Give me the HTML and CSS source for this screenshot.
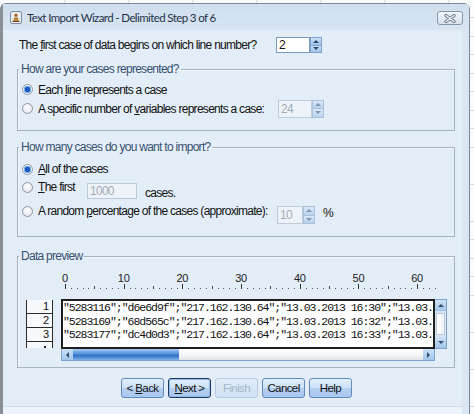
FILE: index.html
```html
<!DOCTYPE html>
<html lang="en">
<head>
<meta charset="utf-8">
<title>Text Import Wizard</title>
<link rel="stylesheet" href="styles.css">
</head>
<body>
<div class="window">
  <div class="titlebar">
    <svg class="app-icon" width="12" height="13" viewBox="0 0 12 13">
      <rect x="0.5" y="0.5" width="11" height="12" rx="1.5" fill="#e6ecf3" stroke="#7f8b98"/>
      <circle cx="6" cy="4.2" r="1.7" fill="#b3692b"/>
      <path d="M3.2 10 L4.2 6.4 H7.8 L8.8 10 Z" fill="#c47b37"/>
      <path d="M2.5 10.5 H9.5" stroke="#6d4a2a" stroke-width="1"/>
    </svg>
    <span class="title">Text Import Wizard - Delimited Step 3 of 6</span>
    <div class="close-btn">
      <svg width="12" height="9" viewBox="0 0 12 9">
        <path d="M2 1.5 L10 7.5 M10 1.5 L2 7.5" stroke="#6a7786" stroke-width="3.2" stroke-linecap="round"/>
        <path d="M2 1.5 L10 7.5 M10 1.5 L2 7.5" stroke="#f3f5f8" stroke-width="1.4" stroke-linecap="round"/>
      </svg>
    </div>
  </div>

  <div class="client">
    <div class="line-row">
      <span class="lbl w257">The <u>f</u>irst case of data begins on which line number?</span>
      <div class="spin">
        <div class="field f34 h16">2</div>
        <div class="sbtns"><span class="up"></span><span class="down"></span></div>
      </div>
    </div>

    <fieldset class="group g1">
      <legend>How are your cases represented?</legend>
      <div class="opt opt-a"><span class="radio on"></span><span class="lbl">Each <u>l</u>ine represents a case</span></div>
      <div class="opt opt-b"><span class="radio"></span><span class="lbl w240">A specific number of <u>v</u>ariables represents a case:</span>
        <div class="spin off">
          <div class="field f34 h18">24</div>
          <div class="sbtns"><span class="up"></span><span class="down"></span></div>
        </div>
      </div>
    </fieldset>

    <fieldset class="group g2">
      <legend>How many cases do you want to import?</legend>
      <div class="opt opt-c"><span class="radio on"></span><span class="lbl"><u>A</u>ll of the cases</span></div>
      <div class="opt opt-d"><span class="radio"></span><span class="lbl w49"><u>T</u>he first</span>
        <div class="field off f50 h16 tf">1000</div>
        <span class="lbl cases">cases.</span>
      </div>
      <div class="opt opt-e"><span class="radio"></span><span class="lbl w239">A random <u>p</u>ercentage of the cases (approximate):</span>
        <div class="spin off sp-pct">
          <div class="field f26 h18">10</div>
          <div class="sbtns"><span class="up"></span><span class="down"></span></div>
        </div>
        <span class="lbl pct">%</span>
      </div>
    </fieldset>

    <fieldset class="group g3">
      <legend>Data preview</legend>
      <div class="ruler">
        <div class="ruler-nums"><span>0</span><span>10</span><span>20</span><span>30</span><span>40</span><span>50</span><span>60</span></div>
        <div class="ruler-ticks"></div>
      </div>
      <div class="preview">
        <div class="rowhdr"><div>1</div><div>2</div><div>3</div><div class="partial"></div></div>
        <div class="grid">
          <div class="grid-top">
            <div class="data">
              <div class="drow">"5283116";"d6e6d9f";"217.162.130.64";"13.03.2013 16:30";"13.03.</div>
              <div class="drow">"5283169";"68d565c";"217.162.130.64";"13.03.2013 16:32";"13.03.</div>
              <div class="drow">"5283177";"dc4d0d3";"217.162.130.64";"13.03.2013 16:33";"13.03.</div>
            </div>
            <div class="vscroll"><span class="sb-btn sb-up"></span><span class="sb-vthumb"></span><span class="sb-btn sb-down"></span></div>
          </div>
          <div class="hscroll"><span class="sb-btn sb-left"></span><span class="sb-hthumb"></span><span class="sb-track"></span><span class="sb-btn sb-right"></span></div>
        </div>
      </div>
    </fieldset>

    <div class="buttons">
      <button class="btn">&lt; <u>B</u>ack</button>
      <button class="btn default"><u>N</u>ext &gt;</button>
      <button class="btn disabled">Finish</button>
      <button class="btn">Cancel</button>
      <button class="btn">Help</button>
    </div>
    <div class="footer-strip"></div>
  </div>
</div>
</body>
</html>
```

FILE: styles.css
```css
* { box-sizing: border-box; }

html, body { margin: 0; height: 100%; }

body {
  padding-top: 3px;
  overflow: hidden;
  background-color: #fbfbfb;
  background-image:
    repeating-linear-gradient(90deg, transparent 0 63px, #d2d2d2 63px 64px),
    repeating-linear-gradient(180deg, transparent 0 17.5px, #dadada 17.5px 18.5px);
  background-position: 1.5px 0, 0 0;
  font-family: "Liberation Sans", Arial, sans-serif;
  font-size: 12px;
  letter-spacing: -0.72px;
  color: #111;
}

.window {
  width: 470px;
  height: 412px;
  display: flex;
  flex-direction: column;
  border: 1px solid #7c8896;
  border-left: 3px solid #8a8f95;
  border-bottom: none;
  border-radius: 6px 6px 0 0;
  background: linear-gradient(90deg, #d4e2f1, #dbe6f3);
}

.titlebar {
  height: 26px;
  display: flex;
  align-items: center;
  background: linear-gradient(#cfdeee, #d8e4f2);
  flex: none;
}

.app-icon { margin-left: 7px; flex: none; }

.title {
  margin-left: 5px;
  font-family: Lato, "Open Sans", sans-serif;
  font-size: 11.5px;
  letter-spacing: -0.6px;
  color: #1f3247;
}

.close-btn {
  margin-left: auto;
  margin-right: 6px;
  margin-top: 2px;
  width: 26px;
  height: 14px;
  border: 1px solid #8797aa;
  border-radius: 3px;
  background: linear-gradient(#f1f5fa, #d6e1ed);
  display: flex;
  align-items: center;
  justify-content: center;
}

.client {
  flex: 1;
  margin-right: 7px;
  background: #e3edf8;
  display: flex;
  flex-direction: column;
}

.lbl { line-height: 14px; white-space: nowrap; flex: none; }
.w257 { width: 257px; }
.w240 { width: 240px; }
.w239 { width: 239px; }
.w49 { width: 49px; }

.line-row {
  margin-top: 7px;
  padding-left: 16px;
  height: 16px;
  display: flex;
  align-items: center;
}

/* spinners & fields */
.spin { display: flex; flex: none; }
.field {
  border: 1px solid #7a98bb;
  background: #fff;
  padding-left: 2px;
  display: flex;
  align-items: center;
  font-size: 12px;
  color: #111;
}
.f34 { width: 34px; }
.f26 { width: 26px; }
.f50 { width: 50px; }
.h16 { height: 16px; }
.h18 { height: 18px; }

.sbtns { width: 12px; display: flex; flex-direction: column; }
.sbtns span {
  flex: 1;
  display: flex;
  align-items: center;
  justify-content: center;
  background: linear-gradient(#cfe2f7, #9fc2ea);
  border: 1px solid #7ea3cd;
}
.sbtns span + span { border-top: none; }
.sbtns span::before {
  content: "";
  border-left: 3px solid transparent;
  border-right: 3px solid transparent;
}
.sbtns .up::before { border-bottom: 3px solid #284a71; }
.sbtns .down::before { border-top: 3px solid #284a71; }

.off .field, .field.off {
  background: #eef3f9;
  border-color: #bccad9;
  color: #a2acb7;
}
.off .sbtns span {
  background: linear-gradient(#d9e7f5, #b9d2ee);
  border-color: #a9c1dc;
}
.off .sbtns .up::before { border-bottom-color: #7d98b8; }
.off .sbtns .down::before { border-top-color: #7d98b8; }

/* group boxes */
.group {
  margin: 0 0 0 14px;
  width: 438px;
  padding: 0 0 12px 0;
  border: 1px solid #a6b2bf;
  min-inline-size: auto;
  box-shadow: inset 1px 1px 0 #f4f8fc;
}
.group legend {
  margin-left: 1px;
  padding: 0 2px;
  line-height: 14px;
  color: #34506f;
}
.g1 { margin-top: 9px; }
.g2 { margin-top: 9px; }
.g3 { margin-top: 12px; padding-bottom: 6px; }

.opt {
  display: flex;
  padding-left: 4px;
  align-items: center;
}
.opt .radio + .lbl { margin-left: 5px; }

.radio {
  flex: none;
  width: 11px;
  height: 11px;
  border-radius: 50%;
  border: 1px solid #8d98a5;
  background: radial-gradient(circle at 50% 40%, #ffffff, #dbe3ec);
}
.radio.on {
  background: radial-gradient(circle, #1a5bbf 0 2.4px, #78abe8 3px 3.5px, #f3f7fb 4.1px);
}

.opt-a { margin-top: 4px; height: 19px; }
.opt-b { height: 19px; }

.opt-c { margin-top: 6px; height: 18px; }
.opt-d { height: 22px; align-items: flex-start; }
.opt-d .radio { margin-top: 3.5px; }
.opt-d .lbl { margin-top: 2px; }
.opt-d .tf { margin-top: 5px; }
.opt-d .cases { margin-left: 8px; margin-top: 8px; }

.opt-e { margin-top: 2px; height: 22px; align-items: flex-start; }
.opt-e .radio { margin-top: 3.5px; }
.opt-e .lbl { margin-top: 2px; }
.opt-e .sp-pct { margin-top: 4px; }
.opt-e .pct { margin-left: 8px; margin-top: 4px; }

/* ruler */
.ruler-nums {
  margin-top: 10px;
  margin-left: 17.65px;
  display: flex;
  height: 11px;
  line-height: 11px;
  font-size: 11px;
  letter-spacing: -0.3px;
  color: #222;
}
.ruler-nums span { width: 58.7px; text-align: center; flex: none; }
.ruler-ticks {
  margin-left: 47px;
  width: 371px;
  height: 5px;
  background-image:
    repeating-linear-gradient(90deg, #333 0 1px, transparent 1px 58.7px),
    repeating-linear-gradient(90deg, #444 0 1px, transparent 1px 29.35px),
    repeating-linear-gradient(90deg, #555 0 1px, transparent 1px 5.87px);
  background-size: 100% 5px, 100% 3px, 100% 1px;
  background-position: 0 0, 0 2px, 0 4px;
  background-repeat: no-repeat;
}

/* preview grid */
.preview {
  margin-top: 10px;
  padding-left: 8px;
  display: flex;
  align-items: flex-start;
}
.rowhdr {
  margin-top: 1px;
  width: 27px;
  height: 48px;
  overflow: hidden;
  border-left: 1px solid #2a2a2a;
  border-right: 1px solid #2a2a2a;
  flex: none;
}
.rowhdr div {
  height: 14px;
  border-bottom: 1px solid #2a2a2a;
  text-align: right;
  padding-right: 3px;
  font-size: 11px;
  line-height: 13px;
  letter-spacing: 0;
  background: #f7f9fc;
}
.rowhdr .partial {
  position: relative;
}
.rowhdr .partial::after {
  content: "";
  position: absolute;
  right: 6px;
  top: 4px;
  width: 2px;
  height: 2px;
  background: #222;
}
.grid { margin-left: 8px; width: 386px; flex: none; }
.grid-top { display: flex; }
.data {
  width: 374px;
  height: 50px;
  border: 2px solid #1e1e1e;
  background: #fff;
  overflow: hidden;
}
.drow {
  height: 13.5px;
  line-height: 13.5px;
  white-space: pre;
  font-family: "Liberation Mono", "Courier New", monospace;
  font-size: 11.5px;
  letter-spacing: -1.03px;
  color: #111;
}
.vscroll {
  width: 12px;
  height: 50px;
  display: flex;
  flex-direction: column;
  background: #d3e3f4;
  border: 1px solid #7da3cf;
  border-left: none;
}
.sb-btn {
  flex: none;
  display: flex;
  align-items: center;
  justify-content: center;
  background: linear-gradient(#cfe2f7, #a2c4ea);
}
.sb-btn::before { content: ""; }
.sb-up, .sb-down { height: 11px; }
.sb-up::before { border-left: 3px solid transparent; border-right: 3px solid transparent; border-bottom: 3px solid #2d4d73; }
.sb-down::before { border-left: 3px solid transparent; border-right: 3px solid transparent; border-top: 3px solid #2d4d73; }
.sb-vthumb {
  margin: 2px 1px;
  flex: 1;
  background: linear-gradient(90deg, #ffffff, #eef1f4);
  border: 1px solid #c3ccd6;
}
.hscroll {
  width: 374px;
  height: 12px;
  display: flex;
  border: 1px solid #7da3cf;
  border-top: none;
}
.sb-left, .sb-right { width: 11px; }
.sb-left::before { border-top: 3px solid transparent; border-bottom: 3px solid transparent; border-right: 3px solid #2d4d73; }
.sb-right::before { border-top: 3px solid transparent; border-bottom: 3px solid transparent; border-left: 3px solid #2d4d73; }
.sb-hthumb {
  width: 106px;
  background: linear-gradient(#a9cbf1 0%, #4f8fd8 45%, #2f72c6 60%, #7fb0e8 100%);
}
.sb-track {
  flex: 1;
  background: linear-gradient(#ffffff, #f2f4f6 60%, #dfe3e8);
}

/* buttons */
.buttons {
  margin-top: 10px;
  padding-left: 118px;
  display: flex;
  gap: 4px;
  height: 20px;
}
.btn {
  width: 43px;
  height: 20px;
  padding: 0;
  border: 1px solid #5f8ab9;
  border-radius: 3px;
  background: linear-gradient(#e2eefb 0%, #cde0f6 48%, #b3cff0 52%, #a8c8ee 100%);
  font-family: "Liberation Sans", Arial, sans-serif;
  font-size: 11.5px;
  letter-spacing: -0.6px;
  color: #111;
}
.btn.default {
  border-color: #1d3a5e;
  box-shadow: inset 0 0 0 1px #93b9e7;
}
.btn.disabled {
  color: #a7b6c7;
  border-color: #b8cbe0;
  background: linear-gradient(#e0ebf7, #d2e2f3);
}

.footer-strip {
  margin-top: 8px;
  flex: 1;
  border-top: 1px solid #d0dbe7;
  background: #edf3fa;
}
```
